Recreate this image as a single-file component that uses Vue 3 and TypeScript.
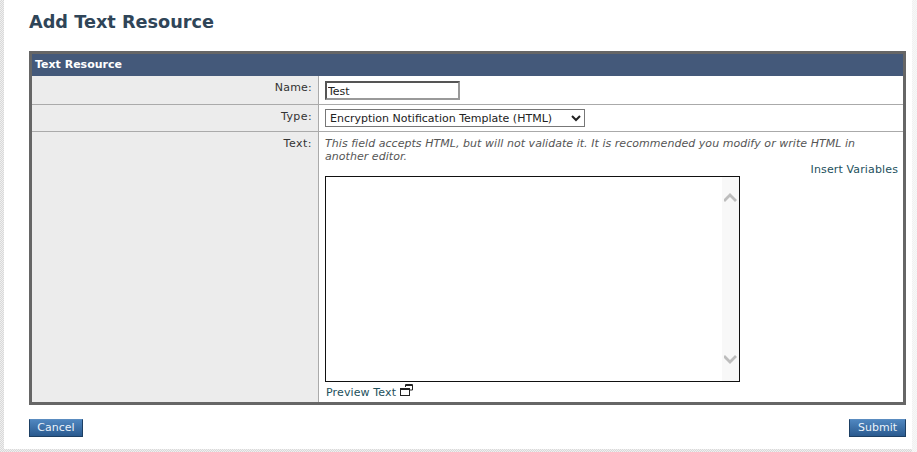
<script setup lang="ts">
const title = 'Add Text Resource'
const selected = 'Encryption Notification Template (HTML)'
</script>

<template>
  <div class="screen">
    <main class="page">
      <h1 class="title">{{ title }}</h1>
      <section class="panel">
        <header class="panel-head">Text Resource</header>
        <div class="row row-name">
          <div class="label">Name:</div>
          <div class="field"><input class="name-input" type="text" value="Test" /></div>
        </div>
        <div class="row row-type">
          <div class="label">Type:</div>
          <div class="field">
            <select class="type-select">
              <option>{{ selected }}</option>
            </select>
          </div>
        </div>
        <div class="row row-text">
          <div class="label">Text:</div>
          <div class="field field-text">
            <p class="hint">This field accepts HTML, but will not validate it. It is recommended you modify or write HTML in another editor.</p>
            <div class="insert"><a class="link">Insert Variables</a></div>
            <div class="editor">
              <textarea class="editor-input"></textarea>
              <div class="scrollbar">
                <svg width="14" height="9" viewBox="0 0 14 9"><path d="M0 8 6 2l6 6" fill="none" stroke="#bdbdbd" stroke-width="2.800" /></svg>
                <svg width="14" height="9" viewBox="0 0 14 9"><path d="M0 1 6 7l6-6" fill="none" stroke="#bdbdbd" stroke-width="2.800" /></svg>
              </div>
            </div>
            <div class="preview">
              <a class="link">Preview Text</a>
              <svg class="popup" width="13" height="12" viewBox="0 0 13 12">
                <path d="M5.500 3V.5h7v5.500H10" fill="none" stroke="#222" />
                <path d="M5.500 1.500h7" fill="none" stroke="#222" />
                <rect x="0.500" y="4.500" width="9" height="7" fill="#fff" stroke="#222" />
                <path d="M.5 5.500h9" stroke="#222" />
              </svg>
            </div>
          </div>
        </div>
      </section>
      <footer class="actions">
        <button class="btn btn-cancel" type="button">Cancel</button>
        <button class="btn btn-submit" type="button">Submit</button>
      </footer>
    </main>
  </div>
</template>

<style>
html, body { margin: 0; padding: 0; background: #fff; overflow: hidden; }
</style>

<style scoped>
.screen {
  width: 917px;
  height: 452px;
  box-sizing: border-box;
  padding: 0 5px 3px 4px;
  background:
    linear-gradient(90deg, transparent 912px, rgba(255, 255, 255, 0.6) 912px),
    repeating-conic-gradient(#d9d9d9 0 25%, #efefef 0 50%) 0 0 / 2px 2px;
  font-family: "DejaVu Sans", Verdana, sans-serif;
  font-size: 11px;
  color: #333;
}
.page {
  height: 449px;
  box-sizing: border-box;
  background: #fff;
  padding: 10px 0 0 25px;
}
.title {
  margin: 0;
  height: 41px;
  font-size: 17.700px;
  line-height: 24px;
  font-weight: bold;
  color: #2f4558;
}
.panel {
  width: 877px;
  height: 354px;
  box-sizing: border-box;
  border: 3px solid #666;
  display: flex;
  flex-direction: column;
  background: #fff;
}
.panel-head {
  height: 22px;
  flex: none;
  box-sizing: border-box;
  background: #44597a;
  color: #fff;
  font-weight: bold;
  line-height: 21px;
  padding-left: 3px;
  font-size: 11px;
}
.row {
  display: grid;
  grid-template-columns: 287px 1fr;
  border-bottom: 1px solid #aaa;
}
.row-name { height: 28px; flex: none; }
.row-type { height: 26px; flex: none; }
.row-text { flex: 1; border-bottom: none; }
.label {
  background: #ececec;
  border-right: 1px solid #aaa;
  text-align: right;
  padding: 5px 6px 0 0;
  color: #333;
  line-height: 14px;
  letter-spacing: 0.2px;
}
.row-text .label { padding-top: 5px; letter-spacing: 0.5px; }
.row-type .label { letter-spacing: 0.4px; }
.field { padding: 5px 6px 0; min-width: 0; }
.row-type .field { padding-top: 4px; }
.name-input {
  display: block;
  width: 135px;
  height: 19px;
  box-sizing: border-box;
  border: 2px solid;
  border-color: #555 #999 #999 #555;
  padding: 1px 1px 0;
  font: 11px "DejaVu Sans", Verdana, sans-serif;
  color: #222;
  outline: none;
}
.type-select {
  display: block;
  width: 260px;
  height: 18px;
  box-sizing: border-box;
  border: 1px solid #777;
  border-radius: 0;
  background: #fff;
  padding: 0;
  font: 11px "DejaVu Sans", Verdana, sans-serif;
  color: #222;
}
.field-text { padding: 5px 5px 0 6px; }
.hint {
  margin: 0;
  font-style: italic;
  color: #555;
  line-height: 13px;
  width: 545px;
  letter-spacing: 0.045px;
}
.insert { text-align: right; line-height: 13px; height: 13px; }
.link { color: #23505c; cursor: pointer; letter-spacing: 0.13px; }
.editor {
  display: flex;
  width: 415px;
  height: 206px;
  box-sizing: border-box;
  border: 1px solid #111;
}
.editor-input {
  flex: 1;
  border: none;
  outline: none;
  resize: none;
  padding: 0;
  min-width: 0;
}
.scrollbar {
  width: 17px;
  flex: none;
  background: #f8f8f8;
  display: flex;
  flex-direction: column;
  align-items: center;
  justify-content: space-between;
  padding: 16px 0 17px;
  box-sizing: border-box;
}
.preview {
  display: flex;
  align-items: flex-start;
  gap: 4px;
  padding: 4px 0 0 1px;
  line-height: 14px;
}
.popup { margin-top: -2px; }
.actions {
  display: flex;
  justify-content: space-between;
  width: 877px;
  padding-top: 14px;
}
.btn {
  height: 18px;
  box-sizing: border-box;
  border: 1px solid #1d3f63;
  border-top-color: #5a8cc0;
  background: linear-gradient(#4f86bf, #2a5a8f);
  color: #eaf3fb;
  font: 11px "DejaVu Sans", Verdana, sans-serif;
  line-height: 16px;
  padding: 0;
  cursor: pointer;
}
.btn-cancel { width: 54px; }
.btn-submit { width: 57px; }
</style>
